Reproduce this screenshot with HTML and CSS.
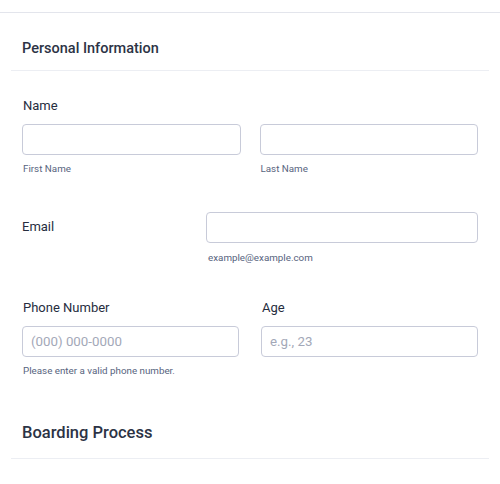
FILE: index.html
```html
<!DOCTYPE html>
<html lang="en">
<head>
    <meta charset="UTF-8">
    <meta name="viewport" content="width=device-width, initial-scale=1.0">
    <title>Personal Information</title>
    <link rel="stylesheet" href="styles.css">
</head>
<body>
    <form class="form">
        <div class="section-head">
            <h2>Personal Information</h2>
        </div>

        <ul class="fields">
            <li class="field field-name">
                <label class="label" for="first">Name</label>
                <div class="pair pair-name">
                    <div class="sub">
                        <input class="input" id="first" type="text">
                        <span class="sublabel">First Name</span>
                    </div>
                    <div class="sub">
                        <input class="input" id="last" type="text">
                        <span class="sublabel">Last Name</span>
                    </div>
                </div>
            </li>

            <li class="field field-inline">
                <label class="label label-side" for="email">Email</label>
                <div class="sub sub-side">
                    <input class="input" id="email" type="email">
                    <span class="sublabel sublabel-email">example@example.com</span>
                </div>
            </li>

            <li class="field field-contact">
                <div class="pair pair-contact">
                    <div class="sub">
                        <label class="label" for="phone">Phone Number</label>
                        <input class="input" id="phone" type="tel" placeholder="(000) 000-0000">
                        <span class="sublabel">Please enter a valid phone number.</span>
                    </div>
                    <div class="sub">
                        <label class="label" for="age">Age</label>
                        <input class="input" id="age" type="text" placeholder="e.g., 23">
                    </div>
                </div>
            </li>
        </ul>

        <div class="section-head section-next">
            <h2 class="big">Boarding Process</h2>
        </div>
    </form>
</body>
</html>
```

FILE: styles.css
```css
body {
    margin: 0;
    background: #ffffff;
    font-family: Roboto, Inter, "Noto Sans", sans-serif;
    color: #2c3345;
}

.form {
    margin: 12px 0 0;
    border-top: 1px solid #e3e5ec;
}

.section-head {
    margin: 0 11px;
    padding: 26px 11px 11px;
    border-bottom: 1px solid #eceef3;
}

.section-head h2 {
    margin: 0;
    font-size: 14.5px;
    line-height: 20px;
    font-weight: 500;
    color: #2c3345;
}

.section-head h2.big {
    font-size: 16.5px;
    line-height: 22px;
}

.section-next {
    padding-top: 32px;
    padding-bottom: 14px;
}

.fields {
    list-style: none;
    margin: 0 11px;
    padding: 0;
}

.field {
    padding: 12px 11px;
}

.field-name {
    padding-top: 25px;
}

.field-inline {
    display: flex;
    align-items: flex-start;
    padding-top: 24px;
}

.field-contact {
    padding-top: 21px;
}

.label {
    display: block;
    margin-bottom: 8px;
    padding-left: 1px;
    font-size: 13px;
    line-height: 20px;
    font-weight: 400;
    color: #262d3e;
}

.label-side {
    width: 184px;
    flex-shrink: 0;
    margin: 0;
    padding: 5px 0 0;
}

.pair {
    display: grid;
    grid-template-columns: 1fr 1fr;
}

.pair-name {
    gap: 19px;
}

.pair-contact {
    gap: 22px;
}

.sub {
    display: flex;
    flex-direction: column;
    min-width: 0;
}

.sub-side {
    flex: 1;
}

.input {
    box-sizing: border-box;
    width: 100%;
    height: 31px;
    margin: 0;
    padding: 0 8px;
    border: 1px solid #c8cbd9;
    border-radius: 4px;
    background: #ffffff;
    font-family: inherit;
    font-size: 13.3px;
    color: #2c3345;
}

.input::placeholder {
    color: #a3a8b8;
}

.sublabel {
    margin-top: 7px;
    padding-left: 1px;
    font-size: 9.8px;
    line-height: 14px;
    color: #57647e;
}

.sublabel-email {
    margin-top: 8px;
    padding-left: 2px;
}
```
